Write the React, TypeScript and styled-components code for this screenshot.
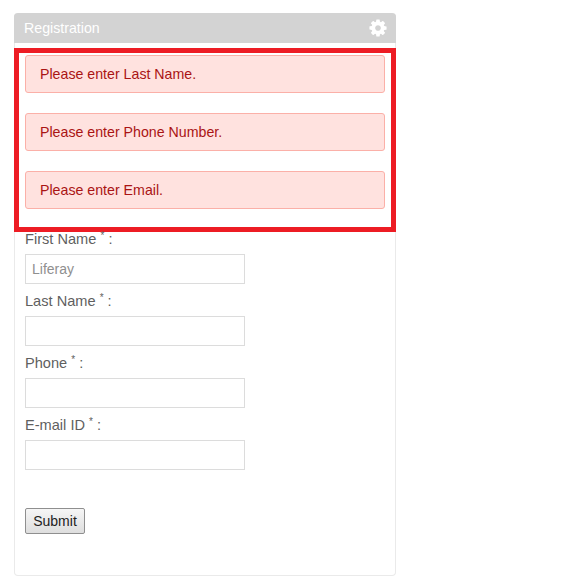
import React from "react";
import styled, { createGlobalStyle } from "styled-components";

const Global = createGlobalStyle`
  html, body { margin: 0; padding: 0; background: #fff; }
  body { font-family: "Liberation Sans", Arial, sans-serif; }
`;

const Page = styled.div`
  width: 575px;
  height: 586px;
  padding: 13px 0 0 14px;
  box-sizing: border-box;
`;

const Portlet = styled.section`
  width: 382px;
  height: 563px;
  box-sizing: border-box;
  border-radius: 4px;
  border: 1px solid #eaeaea;
  border-top: 0;
  display: flex;
  flex-direction: column;
`;

const Header = styled.header`
  height: 30px;
  margin: 0 -1px;
  padding: 0 8px 0 10px;
  background: #d3d3d3;
  border-radius: 4px 4px 0 0;
  display: flex;
  align-items: center;
  justify-content: space-between;
  color: #fff;
  font-size: 14.2px;
`;

const Gear = styled.svg`
  width: 20px;
  height: 20px;
  fill: #fff;
  display: block;
`;

const Highlight = styled.div`
  margin: 5px -1px 0;
  height: 184px;
  box-sizing: border-box;
  border: 5px solid #ed1c24;
  padding: 2px 6px 0;
  display: flex;
  flex-direction: column;
  gap: 20px;
`;

const Alert = styled.div`
  height: 38px;
  box-sizing: border-box;
  padding-left: 14px;
  display: flex;
  align-items: center;
  background: #ffe2df;
  border: 1px solid #fbb0a8;
  border-radius: 3px;
  color: #aa1414;
  font-size: 14.2px;
`;

const Form = styled.form`
  padding: 0 10px;
  display: flex;
  flex-direction: column;
  flex: 1;
`;

const Field = styled.div`
  height: 62px;
  display: flex;
  flex-direction: column;
`;

const Label = styled.label`
  height: 22px;
  display: block;
  color: #5f5f5f;
  font-size: 14.6px;
  line-height: 15px;
`;

const Star = styled.sup`
  font-size: 10px;
  line-height: 0;
  vertical-align: 5px;
`;

const Input = styled.input`
  width: 220px;
  height: 30px;
  box-sizing: border-box;
  border: 1px solid #dcdcdc;
  padding: 0 6px;
  font-family: "Liberation Sans", Arial, sans-serif;
  font-size: 14px;
  color: #555;
  outline: none;
  &::placeholder { color: #8f8f8f; opacity: 1; }
`;

const Submit = styled.button`
  width: 60px;
  height: 26px;
  margin-top: 28px;
  padding: 0;
  border: 1px solid #8f8f8f;
  border-radius: 2px;
  background: linear-gradient(#f6f6f6, #dedede);
  font-family: "Liberation Sans", Arial, sans-serif;
  font-size: 14px;
  color: #222;
`;

const fields = [
  { name: "First Name", placeholder: "Liferay" },
  { name: "Last Name" },
  { name: "Phone" },
  { name: "E-mail ID" },
];

const alerts = ["Please enter Last Name.", "Please enter Phone Number.", "Please enter Email."];

export default function App() {
  return (
    <>
      <Global />
      <Page>
        <Portlet>
          <Header>
            <span>Registration</span>
            <Gear viewBox="0 0 1792 1792" aria-hidden="true">
              <path d="M1152 896q0-106-75-181t-181-75-181 75-75 181 75 181 181 75 181-75 75-181zm512-109v222q0 12-8 23t-20 13l-185 28q-19 54-39 91 35 50 107 138 10 12 10 25t-9 23q-27 37-99 108t-94 71q-12 0-26-9l-138-108q-44 23-91 38-16 136-29 186-7 28-36 28h-222q-14 0-24.5-8.5t-11.5-21.5l-28-184q-49-16-90-37l-141 107q-10 9-25 9-14 0-25-11-126-114-165-168-7-10-7-23 0-12 8-23 15-21 51-66.5t54-70.5q-27-50-41-99l-183-27q-13-2-21-12.5t-8-23.5v-222q0-12 8-23t19-13l186-28q14-46 39-92-40-57-107-138-10-12-10-24 0-10 9-23 26-36 98.5-107.5t94.5-71.5q13 0 26 10l138 107q44-23 91-38 16-136 29-186 7-28 36-28h222q14 0 24.5 8.5t11.5 21.5l28 184q49 16 90 37l142-107q9-9 24-9 13 0 25 10 129 119 165 170 7 8 7 22 0 12-8 23-15 21-51 66.5t-54 70.5q26 50 41 98l183 28q13 2 21 12.5t8 23.5z" />
            </Gear>
          </Header>
          <Highlight>
            {alerts.map((a) => (
              <Alert key={a}>{a}</Alert>
            ))}
          </Highlight>
          <Form onSubmit={(e) => e.preventDefault()}>
            {fields.map((f) => (
              <Field key={f.name}>
                <Label>
                  {f.name} <Star>*</Star> :
                </Label>
                <Input placeholder={f.placeholder} />
              </Field>
            ))}
            <Submit type="submit">Submit</Submit>
          </Form>
        </Portlet>
      </Page>
    </>
  );
}
